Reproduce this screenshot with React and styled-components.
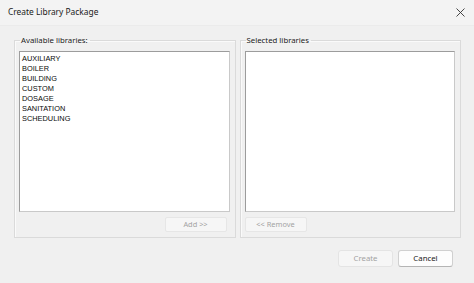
import React from 'react';
import styled, { createGlobalStyle } from 'styled-components';

const GlobalStyle = createGlobalStyle`
  html, body {
    margin: 0;
    padding: 0;
    background: #f0f0f0;
  }
  * {
    box-sizing: border-box;
  }
`;

const UI_FONT = '"Segoe UI", "Noto Sans", "Open Sans", sans-serif';
const LIST_FONT = '"Liberation Sans", Arial, sans-serif';

const Window = styled.div`
  width: 474px;
  height: 283px;
  display: flex;
  flex-direction: column;
  background: #f0f0f0;
  font-family: ${UI_FONT};
  color: #1b1b1b;
  overflow: hidden;
`;

const TitleBar = styled.div`
  height: 26px;
  flex: none;
  display: flex;
  align-items: center;
  justify-content: space-between;
  padding: 0 9px 0 8px;
  background: #f3f3f3;
  border-bottom: 1px solid #ebebeb;
`;

const Title = styled.span`
  font-size: 8.4px;
  color: #1a1a1a;
  line-height: 1;
`;

const CloseButton = styled.button`
  appearance: none;
  border: none;
  background: transparent;
  padding: 0;
  width: 10px;
  height: 10px;
  display: flex;
  align-items: center;
  justify-content: center;
  color: #333;
`;

const Body = styled.div`
  flex: 1;
  display: flex;
  flex-direction: column;
  padding: 9px 13px 0 14px;
`;

const Groups = styled.div`
  display: flex;
  gap: 4px;
`;

const Group = styled.fieldset`
  flex: 1;
  min-width: 0;
  margin: 0;
  padding: 6px 5px 5px 4px;
  border: 1px solid #dadada;
  box-shadow: inset 1px 1px 0 #fafafa;
  display: flex;
  flex-direction: column;
`;

const Legend = styled.legend`
  font-size: 7.8px;
  line-height: 10px;
  padding: 0 2px 0 1px;
  margin-left: 1px;
  color: #1b1b1b;
`;

const ListBox = styled.ul`
  margin: 0;
  padding: 2px 2px;
  list-style: none;
  height: 161px;
  background: #ffffff;
  border: 1px solid #9c9c9c;
  border-right-color: #c9c9c9;
  border-bottom-color: #c9c9c9;
  overflow: hidden;
`;

const ListItem = styled.li`
  font-family: ${LIST_FONT};
  font-size: 7.4px;
  line-height: 10px;
  height: 10px;
  color: #0a0a0a;
  white-space: nowrap;
`;

const ButtonRow = styled.div`
  display: flex;
  justify-content: ${({ align }) => (align === 'end' ? 'flex-end' : 'flex-start')};
  padding: ${({ align }) => (align === 'end' ? '0 3px 0 0' : '0')};
  margin-top: 5px;
`;

const SmallButton = styled.button`
  appearance: none;
  width: 62px;
  height: 15px;
  padding: 0;
  font-family: ${UI_FONT};
  font-size: 7.4px;
  line-height: 1;
  color: #a3a3a3;
  background: #f6f6f6;
  border: 1px solid #e6e6e6;
  border-radius: 2px;
`;

const Footer = styled.div`
  display: flex;
  justify-content: flex-end;
  gap: 5px;
  padding: 12px 8px 0 0;
`;

const DialogButton = styled.button`
  appearance: none;
  width: 55px;
  height: 17px;
  padding: 0;
  font-family: ${UI_FONT};
  font-size: 7.8px;
  line-height: 1;
  border-radius: 3px;
  color: ${({ disabled }) => (disabled ? '#a3a3a3' : '#1a1a1a')};
  background: ${({ disabled }) => (disabled ? '#f6f6f6' : '#fdfdfd')};
  border: 1px solid ${({ disabled }) => (disabled ? '#e4e4e4' : '#d0d0d0')};
  border-bottom-color: ${({ disabled }) => (disabled ? '#e4e4e4' : '#b4b4b4')};
`;

const LIBRARIES = ['AUXILIARY', 'BOILER', 'BUILDING', 'CUSTOM', 'DOSAGE', 'SANITATION', 'SCHEDULING'];

const CloseIcon = () => (
  <svg width="9" height="9" viewBox="0 0 9 9" aria-hidden="true">
    <path d="M0.5 0.5 L8.5 8.5 M8.5 0.5 L0.5 8.5" stroke="currentColor" strokeWidth="0.9" fill="none" />
  </svg>
);

const App = () => {
  const [available] = React.useState(LIBRARIES);
  const [selected] = React.useState([]);

  return (
    <>
      <GlobalStyle />
      <Window>
        <TitleBar>
          <Title>Create Library Package</Title>
          <CloseButton type="button" aria-label="Close">
            <CloseIcon />
          </CloseButton>
        </TitleBar>
        <Body>
          <Groups>
            <Group>
              <Legend>Available libraries:</Legend>
              <ListBox>
                {available.map((name) => (
                  <ListItem key={name}>{name}</ListItem>
                ))}
              </ListBox>
              <ButtonRow align="end">
                <SmallButton type="button" disabled>Add &gt;&gt;</SmallButton>
              </ButtonRow>
            </Group>
            <Group>
              <Legend>Selected libraries</Legend>
              <ListBox>
                {selected.map((name) => (
                  <ListItem key={name}>{name}</ListItem>
                ))}
              </ListBox>
              <ButtonRow>
                <SmallButton type="button" disabled>&lt;&lt; Remove</SmallButton>
              </ButtonRow>
            </Group>
          </Groups>
          <Footer>
            <DialogButton type="button" disabled>Create</DialogButton>
            <DialogButton type="button">Cancel</DialogButton>
          </Footer>
        </Body>
      </Window>
    </>
  );
};

export default App;
